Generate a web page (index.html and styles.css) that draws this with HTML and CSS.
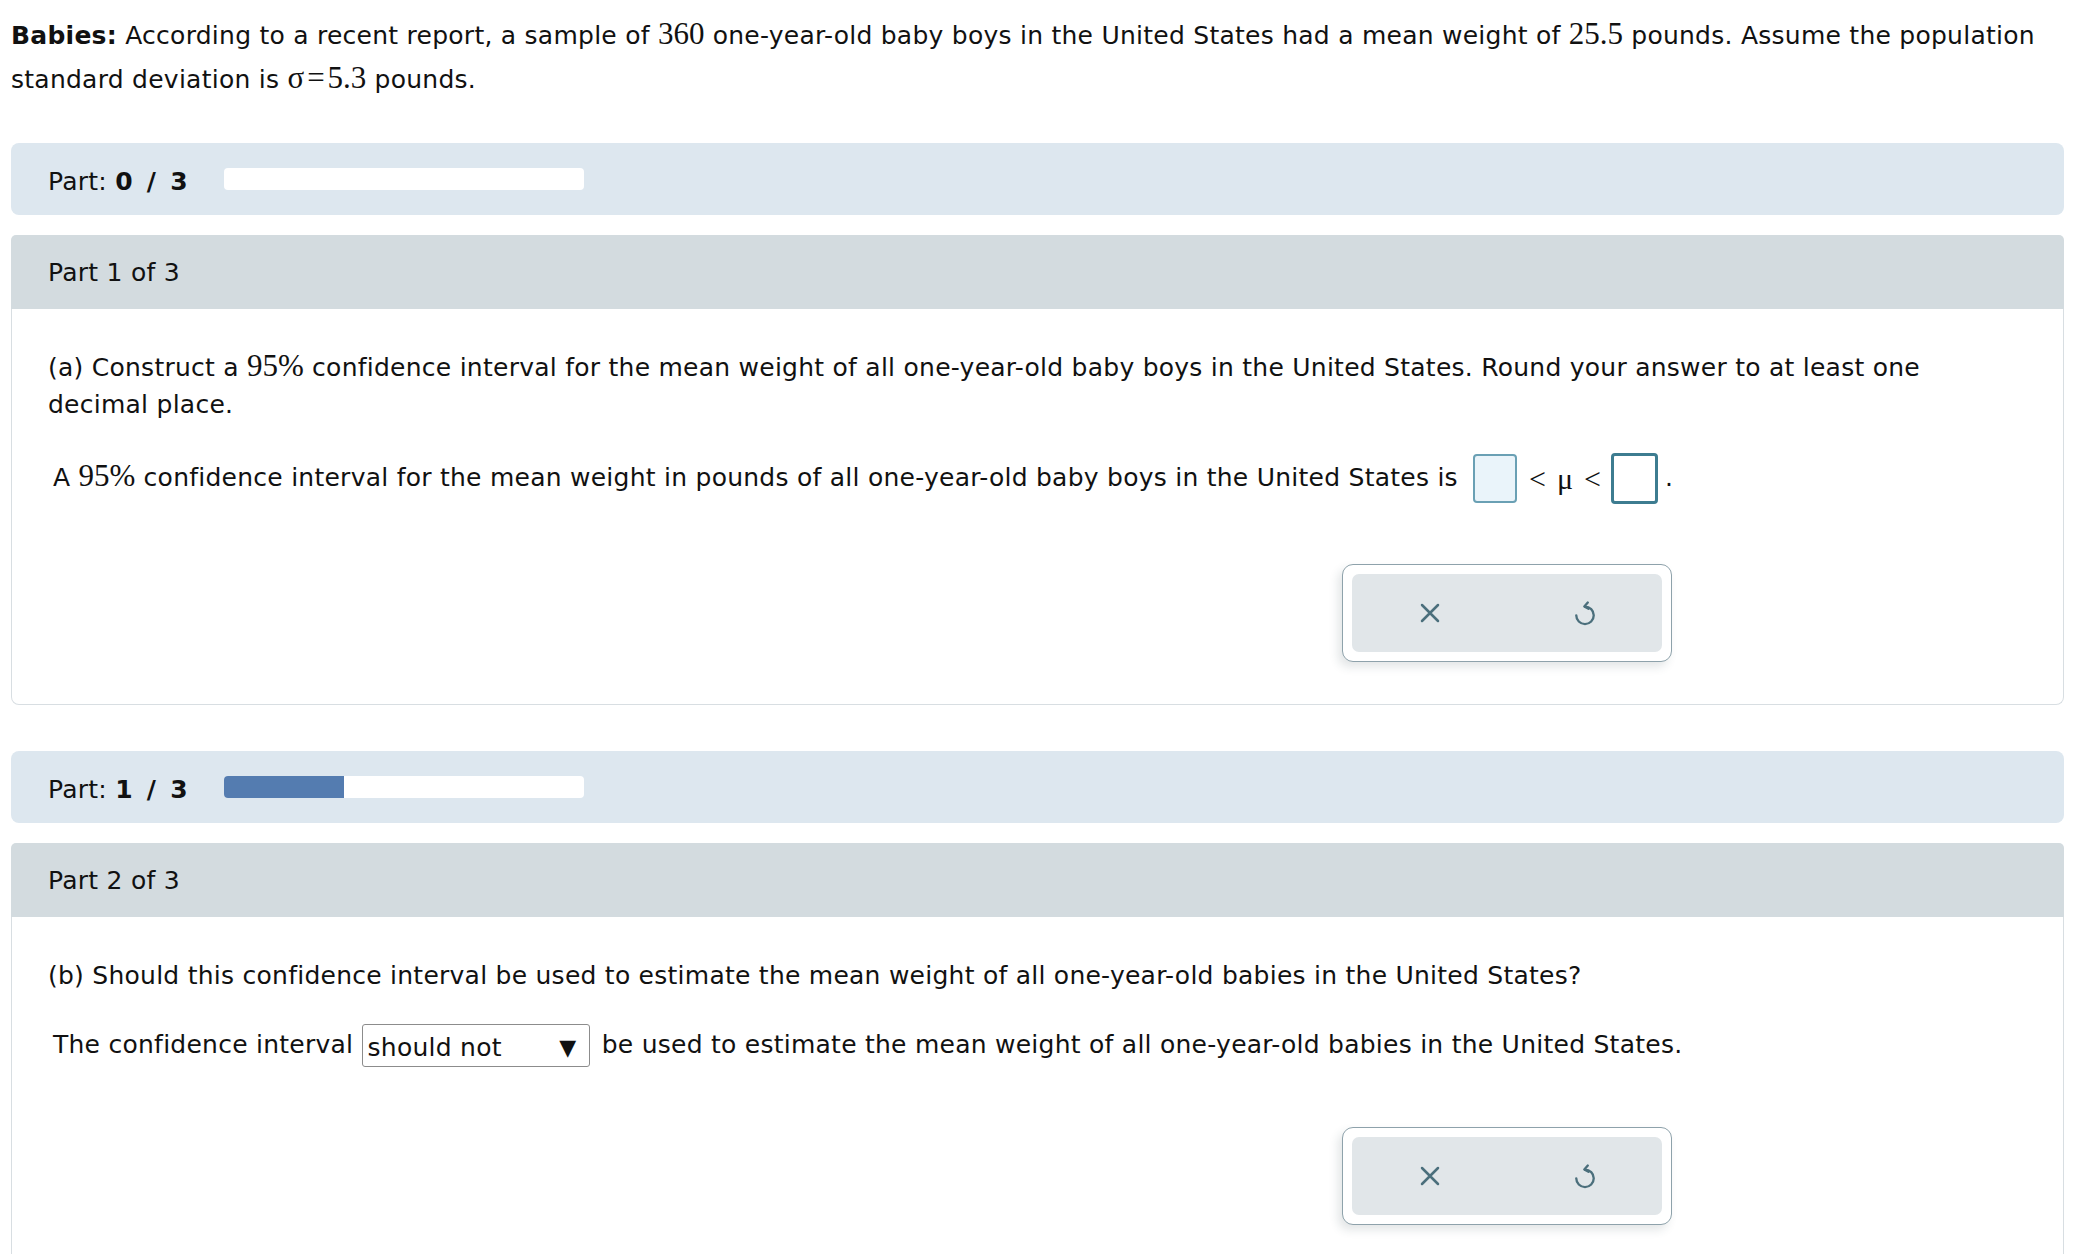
FILE: index.html
```html
<!DOCTYPE html>
<html lang="en">
<head>
<meta charset="utf-8">
<title>Babies</title>
<link rel="stylesheet" href="styles.css">
</head>
<body>
<div class="page">
  <p class="intro"><b>Babies:</b> According to a recent report, a sample of <span class="m">360</span> one-year-old baby boys in the United States had a mean weight of <span class="m">25.5</span> pounds. Assume the population standard deviation is <span class="m">σ<span class="eq">=</span>5.3</span> pounds.</p>

  <div class="progress">
    <span class="plabel">Part: <b>0 / 3</b></span>
    <div class="track"><div class="fill" style="width:0%"></div></div>
  </div>
  <section class="part">
    <div class="part-head">Part 1 of 3</div>
    <div class="part-body">
      <p class="prompt">(a) Construct a <span class="m">95%</span> confidence interval for the mean weight of all one-year-old baby boys in the United States. Round your answer to at least one decimal place.</p>
      <p class="answer">A <span class="m">95%</span> confidence interval for the mean weight in pounds of all one-year-old baby boys in the United States is <span class="box box-light"></span><span class="m rel">&lt;<span class="mu">μ</span>&lt;</span><span class="box box-dark"></span>.</p>
      <div class="panel-row">
        <div class="panel">
          <div class="panel-inner">
            <span class="btn"><svg width="24" height="24" viewBox="0 0 24 24"><path d="M4 4 L20 20 M20 4 L4 20" fill="none" stroke="#4b6f7c" stroke-width="2.5" stroke-linecap="round"/></svg></span>
            <span class="btn"><svg width="28" height="28" viewBox="0 0 24 24"><path d="M12 6.5 A7.5 7.5 0 1 1 4.5 14" fill="none" stroke="#4b6f7c" stroke-width="2" stroke-linecap="round"/><path d="M14.4 3 L11.4 6.4 L15 8.4" fill="none" stroke="#4b6f7c" stroke-width="2" stroke-linecap="round" stroke-linejoin="round"/></svg></span>
          </div>
        </div>
      </div>
    </div>
  </section>

  <div class="progress">
    <span class="plabel">Part: <b>1 / 3</b></span>
    <div class="track"><div class="fill" style="width:33.33%"></div></div>
  </div>
  <section class="part">
    <div class="part-head">Part 2 of 3</div>
    <div class="part-body">
      <p class="prompt">(b) Should this confidence interval be used to estimate the mean weight of all one-year-old babies in the United States?</p>
      <p class="answer">The confidence interval <span class="select"><span>should not</span><span class="arrow">▼</span></span> be used to estimate the mean weight of all one-year-old babies in the United States.</p>
      <div class="panel-row">
        <div class="panel">
          <div class="panel-inner">
            <span class="btn"><svg width="24" height="24" viewBox="0 0 24 24"><path d="M4 4 L20 20 M20 4 L4 20" fill="none" stroke="#4b6f7c" stroke-width="2.5" stroke-linecap="round"/></svg></span>
            <span class="btn"><svg width="28" height="28" viewBox="0 0 24 24"><path d="M12 6.5 A7.5 7.5 0 1 1 4.5 14" fill="none" stroke="#4b6f7c" stroke-width="2" stroke-linecap="round"/><path d="M14.4 3 L11.4 6.4 L15 8.4" fill="none" stroke="#4b6f7c" stroke-width="2" stroke-linecap="round" stroke-linejoin="round"/></svg></span>
          </div>
        </div>
      </div>
    </div>
  </section>
</div>
</body>
</html>
```

FILE: styles.css
```css
html, body {
  margin: 0;
  padding: 0;
  background: #ffffff;
}
body {
  font-family: "DejaVu Sans", Verdana, sans-serif;
  font-size: 25px;
  letter-spacing: 0.25px;
  color: #111;
}
.page {
  margin: 0 14px 0 11px;
  padding-top: 14px;
}
.intro {
  margin: 0 0 41px 0;
  line-height: 44px;
}
.m {
  font-family: "Liberation Serif", "Times New Roman", serif;
  font-size: 31px;
  letter-spacing: 0;
  line-height: 0;
}
.eq {
  padding: 0 3px;
}
.progress {
  height: 72px;
  background: #dde7ef;
  border-radius: 8px;
  display: flex;
  align-items: center;
  padding: 0 37px;
  margin-bottom: 20px;
}
.plabel {
  padding-top: 6px;
  line-height: 28px;
  width: 176px;
}
.plabel b {
  word-spacing: 5px;
}
.track {
  width: 360px;
  height: 22px;
  background: #ffffff;
  border-radius: 4px;
  overflow: hidden;
}
.fill {
  height: 100%;
  background: #547cb0;
}
.part {
  margin-bottom: 46px;
}
.part-head {
  background: #d3dbdf;
  height: 74px;
  display: flex;
  align-items: center;
  padding: 0 37px;
  border-radius: 5px 5px 0 0;
}
.part-body {
  border: 1px solid #d8dee2;
  border-top: none;
  border-radius: 0 0 8px 8px;
  padding: 40px 36px 42px 36px;
}
.prompt {
  margin: 0;
  line-height: 37px;
}
.answer {
  margin: 30px 0 0 0;
  padding-left: 5px;
  line-height: 37px;
}
.box {
  display: inline-block;
  width: 44px;
  height: 49px;
  box-sizing: border-box;
  border-radius: 4px;
  vertical-align: middle;
  margin: 0 12px 0 7px;
}
.box-light {
  background: #eaf4fa;
  border: 2px solid #6aa0b4;
}
.box-dark {
  width: 47px;
  height: 51px;
  background: #ffffff;
  border: 3px solid #3d7c90;
  margin: 0 7px 0 10px;
}
.rel {
  vertical-align: middle;
  font-size: 30px;
}
.mu {
  padding: 0 11px;
}
.select {
  display: inline-flex;
  align-items: center;
  justify-content: space-between;
  box-sizing: border-box;
  width: 228px;
  height: 43px;
  border: 1px solid #8c8c8c;
  border-radius: 3px;
  padding: 4px 12px 0 5px;
  vertical-align: middle;
  margin: 0 4px 0 0;
  background: #fff;
}
.arrow {
  font-size: 22px;
}
.panel-row {
  margin-top: 60px;
  display: flex;
}
.panel {
  margin-left: 1294px;
  width: 330px;
  height: 98px;
  box-sizing: border-box;
  border: 1px solid #8ea2ab;
  border-radius: 11px;
  background: #fff;
  padding: 9px;
  box-shadow: -4px 5px 10px rgba(40, 60, 70, 0.13);
}
.panel-inner {
  height: 100%;
  background: #e1e6e9;
  border-radius: 7px;
  display: flex;
}
.btn {
  flex: 1;
  display: flex;
  align-items: center;
  justify-content: center;
}
```
